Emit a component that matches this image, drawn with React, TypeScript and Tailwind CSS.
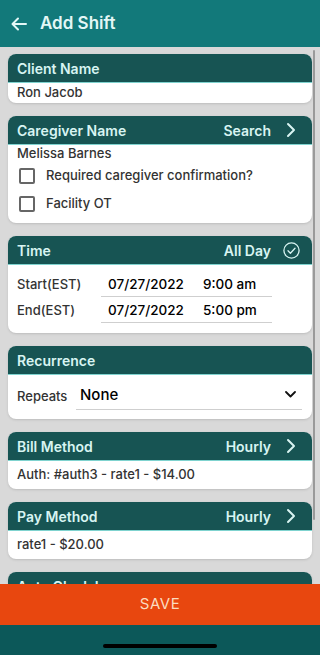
import React from "react";

const Chevron = () => (
  <svg width="10" height="16" viewBox="0 0 10 16" fill="none" stroke="#d8f4f2" strokeWidth="2" strokeLinecap="round" strokeLinejoin="round" className="ml-[15px]">
    <path d="M2 2l6 6-6 6" />
  </svg>
);

const Header = ({ title, right, icon, pr = "pr-[16px]" }: { title: string; right?: string; icon?: React.ReactNode; pr?: string }) => (
  <div className={`flex items-center h-[29px] bg-[#175453] border-b border-[#7fd3cf] pl-[9px] ${pr} text-[#d8f4f2] text-[14px] font-semibold`}>
    <span className="flex-1">{title}</span>
    {right && <span>{right}</span>}
    {icon}
  </div>
);

const Checkbox = ({ label, h }: { label: string; h: string }) => (
  <div className={`flex items-center ${h}`}>
    <div className="ml-[11px] w-[16px] h-[16px] border-2 border-[#666] rounded-[2px]" />
    <span className="ml-[11px] text-[13px] font-medium text-[#333]">{label}</span>
  </div>
);

const TimeRow = ({ label, date, time }: { label: string; date: string; time: string }) => (
  <div className="flex items-end h-[26px]">
    <span className="w-[93px] pl-[9px] text-[13px] font-medium text-[#333] pb-[3px]">{label}</span>
    <div className="w-[171px] flex border-b border-[#cfcfcf] pb-[2px] text-[13.5px] font-medium text-black">
      <span className="w-[102px] pl-[7px]">{date}</span>
      <span>{time}</span>
    </div>
  </div>
);

export default function App() {
  return (
    <div className="relative w-[320px] h-[655px] overflow-hidden bg-[#d9d9d9]" style={{ fontFamily: "Inter, 'Noto Sans', sans-serif" }}>
      <div className="h-[47px] bg-[#12797a] flex items-center">
        <svg className="ml-[11px]" width="16" height="14" viewBox="0 0 16 14" fill="none" stroke="#e3f7f6" strokeWidth="2" strokeLinecap="round" strokeLinejoin="round">
          <path d="M15 7H2M7 1.5L1.5 7 7 12.5" />
        </svg>
        <span className="ml-[13px] text-[17px] font-semibold text-[#e3f7f6]">Add Shift</span>
      </div>

      <div className="flex flex-col gap-[13px] px-[8px] pt-[7px]">
        <div className="w-[304px] rounded-[8px] overflow-hidden bg-white shadow-sm">
          <Header title="Client Name" />
          <div className="h-[20px] pl-[9px] flex items-center text-[13px] font-medium text-[#333]">Ron Jacob</div>
        </div>

        <div className="w-[304px] rounded-[8px] overflow-hidden bg-white shadow-sm">
          <Header title="Caregiver Name" right="Search" icon={<Chevron />} />
          <div className="pb-[4px]">
            <div className="h-[18px] pl-[9px] flex items-center text-[13px] font-medium text-[#333]">Melissa Barnes</div>
            <Checkbox label="Required caregiver confirmation?" h="h-[26px]" />
            <Checkbox label="Facility OT" h="h-[30px]" />
          </div>
        </div>

        <div className="w-[304px] rounded-[8px] overflow-hidden bg-white shadow-sm">
          <Header
            title="Time"
            right="All Day"
            pr="pr-[12px]"
            icon={
              <svg width="17" height="17" viewBox="0 0 17 17" fill="none" stroke="#d8f4f2" strokeWidth="1.3" strokeLinecap="round" strokeLinejoin="round" className="ml-[12px]">
                <circle cx="8.5" cy="8.5" r="7.6" />
                <path d="M5 8.8l2.4 2.4 4.6-5" />
              </svg>
            }
          />
          <div className="pt-[6px] pb-[10px]">
            <TimeRow label="Start(EST)" date="07/27/2022" time="9:00 am" />
            <TimeRow label="End(EST)" date="07/27/2022" time="5:00 pm" />
          </div>
        </div>

        <div className="w-[304px] rounded-[8px] overflow-hidden bg-white shadow-sm">
          <Header title="Recurrence" />
          <div className="flex items-end h-[44px] pt-[9px] pb-[9px]">
            <span className="w-[68px] pl-[9px] text-[13px] font-medium text-[#333] pb-[4px]">Repeats</span>
            <div className="w-[226px] flex items-center border-b border-[#cfcfcf] pb-[3px] pl-[4px] pr-[6px]">
              <span className="flex-1 text-[15px] font-medium text-black">None</span>
              <svg width="11" height="7" viewBox="0 0 11 7" fill="none" stroke="#111" strokeWidth="1.8" strokeLinecap="round" strokeLinejoin="round">
                <path d="M1 1l4.5 4.5L10 1" />
              </svg>
            </div>
          </div>
        </div>

        <div className="w-[304px] rounded-[8px] overflow-hidden bg-white shadow-sm">
          <Header title="Bill Method" right="Hourly" icon={<Chevron />} />
          <div className="h-[28px] pl-[9px] flex items-center text-[13px] font-medium text-[#333]">Auth: #auth3 - rate1 - $14.00</div>
        </div>

        <div className="w-[304px] rounded-[8px] overflow-hidden bg-white shadow-sm">
          <Header title="Pay Method" right="Hourly" icon={<Chevron />} />
          <div className="h-[28px] pl-[9px] flex items-center text-[13px] font-medium text-[#333]">rate1 - $20.00</div>
        </div>

        <div className="w-[304px] rounded-[8px] overflow-hidden bg-white shadow-sm">
          <Header title="Auto Clock In" />
          <div className="h-[28px]" />
        </div>
      </div>

      <div className="absolute right-[5px] top-[50px] w-[2px] h-[470px] bg-[#9a9a9a] rounded-full" />

      <div className="absolute left-0 right-0 bottom-0">
        <div className="h-[41px] bg-[#e8470f] flex items-center justify-center text-[15px] tracking-[0.5px] text-[#fbdcc0]">SAVE</div>
        <div className="h-[30px] bg-[#0c5859] flex items-end justify-center pb-[7px]">
          <div className="w-[114px] h-[4px] rounded-full bg-black" />
        </div>
      </div>
    </div>
  );
}
